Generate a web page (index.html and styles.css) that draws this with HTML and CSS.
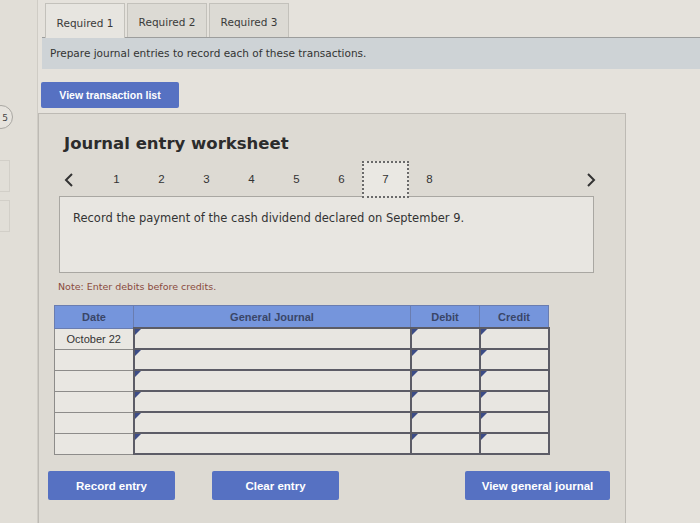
FILE: index.html
```html
<!DOCTYPE html>
<html>
<head>
<meta charset="utf-8">
<link rel="stylesheet" href="styles.css">
</head>
<body>
<div class="page">
  <div class="gutter">
    <div class="qnum">5</div>
    <div class="ghost-box"></div>
    <div class="ghost-box"></div>
  </div>
  <div class="main">
    <div class="tabs">
      <div class="tab active">Required 1</div>
      <div class="tab">Required 2</div>
      <div class="tab">Required 3</div>
    </div>
    <div class="instr">Prepare journal entries to record each of these transactions.</div>
    <button class="btn btn-list">View transaction list</button>
    <div class="panel">
      <h1 class="title">Journal entry worksheet</h1>
      <div class="pager">
        <span class="chev">
          <svg width="12" height="16" viewBox="0 0 12 16"><path d="M9 2 L3 8 L9 14" fill="none" stroke="#333" stroke-width="2"/></svg>
        </span>
        <span class="pg">1</span>
        <span class="pg">2</span>
        <span class="pg">3</span>
        <span class="pg">4</span>
        <span class="pg">5</span>
        <span class="pg">6</span>
        <span class="pg current">7</span>
        <span class="pg">8</span>
        <span class="spacer"></span>
        <span class="chev right">
          <svg width="12" height="16" viewBox="0 0 12 16"><path d="M3 2 L9 8 L3 14" fill="none" stroke="#333" stroke-width="2"/></svg>
        </span>
      </div>
      <div class="record">Record the payment of the cash dividend declared on September 9.</div>
      <div class="note">Note: Enter debits before credits.</div>
      <table class="journal">
        <thead>
          <tr><th class="c-date">Date</th><th class="c-gj">General Journal</th><th class="c-amt">Debit</th><th class="c-amt">Credit</th></tr>
        </thead>
        <tbody>
          <tr><td class="date">October 22</td><td class="inp"></td><td class="inp"></td><td class="inp"></td></tr>
          <tr><td class="date"></td><td class="inp"></td><td class="inp"></td><td class="inp"></td></tr>
          <tr><td class="date"></td><td class="inp"></td><td class="inp"></td><td class="inp"></td></tr>
          <tr><td class="date"></td><td class="inp"></td><td class="inp"></td><td class="inp"></td></tr>
          <tr><td class="date"></td><td class="inp"></td><td class="inp"></td><td class="inp"></td></tr>
          <tr><td class="date"></td><td class="inp"></td><td class="inp"></td><td class="inp"></td></tr>
        </tbody>
      </table>
      <div class="actions">
        <button class="btn btn-act">Record entry</button>
        <button class="btn btn-act btn-clear">Clear entry</button>
        <span class="spacer"></span>
        <button class="btn btn-act btn-view">View general journal</button>
      </div>
    </div>
  </div>
</div>
</body>
</html>
```

FILE: styles.css
```css
html, body {
  margin: 0;
  padding: 0;
}
body {
  width: 700px;
  height: 523px;
  overflow: hidden;
  background: #e5e2dc;
  font-family: "DejaVu Sans", Verdana, sans-serif;
  color: #333;
}
.page {
  display: flex;
  height: 523px;
}
.gutter {
  width: 38px;
  flex: none;
  position: relative;
  background: #e1ded7;
  border-right: 1px solid #cfccc5;
  box-sizing: border-box;
}
.qnum {
  position: absolute;
  left: -11px;
  top: 105px;
  width: 24px;
  height: 24px;
  border: 1px solid #a9a7a2;
  border-radius: 50%;
  font-size: 9px;
  line-height: 24px;
  text-align: right;
  padding-right: 4px;
  box-sizing: border-box;
  color: #444;
  background: #e6e3dd;
}
.ghost-box {
  position: absolute;
  left: -4px;
  width: 12px;
  height: 30px;
  border: 1px solid #d2cfc8;
}
.ghost-box:nth-child(2) { top: 160px; }
.ghost-box:nth-child(3) { top: 200px; }
.main {
  flex: 1;
  display: flex;
  flex-direction: column;
  align-items: flex-start;
}
.tabs {
  display: flex;
  gap: 2px;
  margin-left: 7px;
  margin-top: 3px;
  position: relative;
  z-index: 1;
}
.tab {
  width: 80px;
  height: 34px;
  box-sizing: border-box;
  border: 1px solid #c3c1bb;
  border-bottom: none;
  background: #dcdad4;
  font-size: 10.5px;
  line-height: 36px;
  text-align: center;
  color: #3a3a3a;
}
.tab.active {
  background: #e7e5e0;
  height: 35px;
  margin-bottom: -1px;
  line-height: 38px;
}
.instr {
  align-self: stretch;
  margin-left: 4px;
  height: 32px;
  box-sizing: border-box;
  background: #ced3d6;
  border-top: 1px solid #9c9d9c;
  font-size: 10.5px;
  line-height: 31px;
  padding-left: 8px;
  color: #333;
}
.btn {
  border: none;
  border-radius: 2px;
  background: #5671c2;
  color: #fff;
  font-family: "Liberation Sans", Arial, sans-serif;
  font-weight: bold;
  cursor: pointer;
  padding: 0;
}
.btn-list {
  margin-left: 3px;
  margin-top: 13px;
  width: 138px;
  height: 26px;
  font-size: 10.5px;
}
.panel {
  margin-top: 5px;
  width: 588px;
  flex: 1;
  box-sizing: border-box;
  border: 1px solid #bdbab4;
  border-bottom: none;
  background: #dddad3;
  padding: 19px 31px 0 15px;
  display: flex;
  flex-direction: column;
}
.title {
  margin: 0 0 0 10px;
  font-size: 16.5px;
  line-height: 21px;
  font-weight: bold;
  color: #2c2c2c;
}
.pager {
  display: flex;
  align-items: center;
  margin-top: 7px;
  height: 37px;
  padding-left: 9px;
  position: relative;
  z-index: 1;
}
.chev {
  width: 31px;
  height: 16px;
  display: flex;
  align-items: center;
}
.chev.right {
  width: 14px;
  margin-right: -5px;
}
.pg {
  width: 45px;
  height: 37px;
  box-sizing: border-box;
  font-family: "Liberation Sans", Arial, sans-serif;
  font-size: 11.5px;
  line-height: 37px;
  text-align: center;
  color: #333;
}
.pg.current {
  width: 47px;
  margin: 0 -2px 0 -2px;
  border: 2px dotted #6a6a6a;
  background: #eae8e3;
  line-height: 33px;
}
.spacer {
  flex: 1;
}
.record {
  margin: -2px 0 0 5px;
  height: 77px;
  box-sizing: border-box;
  border: 1px solid #a9a7a2;
  background: #e8e6e1;
  padding: 13px 13px;
  font-size: 11.5px;
  line-height: 16px;
  color: #333;
}
.note {
  margin: 7px 0 0 4px;
  font-size: 9.5px;
  line-height: 14px;
  color: #8a4b3e;
}
.journal {
  margin-top: 11px;
  width: 491px;
  border-collapse: collapse;
  table-layout: fixed;
}
.journal th {
  height: 21px;
  padding: 0;
  background: #7595dc;
  border: 1px solid #6a7db0;
  font-family: "Liberation Sans", Arial, sans-serif;
  font-size: 11px;
  font-weight: bold;
  color: #3a4668;
}
.c-date { width: 78px; }
.c-gj { width: 276px; }
.c-amt { width: 68px; }
.journal td {
  height: 19px;
  padding: 0;
}
.journal td.date {
  border: 1px solid #8d8c8a;
  background: #e9e7e2;
  font-family: "Liberation Sans", Arial, sans-serif;
  font-size: 11px;
  text-align: center;
  color: #333;
}
.journal td.inp {
  border: 2px solid #5c5c66;
  background: #e8e6e1;
  position: relative;
}
.journal td.inp::before {
  content: "";
  position: absolute;
  left: 0;
  top: 0;
  border-top: 3px solid #3c4c86;
  border-right: 3px solid transparent;
  border-bottom: 3px solid transparent;
  border-left: 3px solid #3c4c86;
}
.actions {
  display: flex;
  margin-top: 16px;
  margin-left: -6px;
  margin-right: -16px;
}
.btn-act {
  width: 127px;
  height: 29px;
  font-size: 11.5px;
}
.btn-clear {
  margin-left: 37px;
}
.btn-view {
  width: 145px;
}
```
